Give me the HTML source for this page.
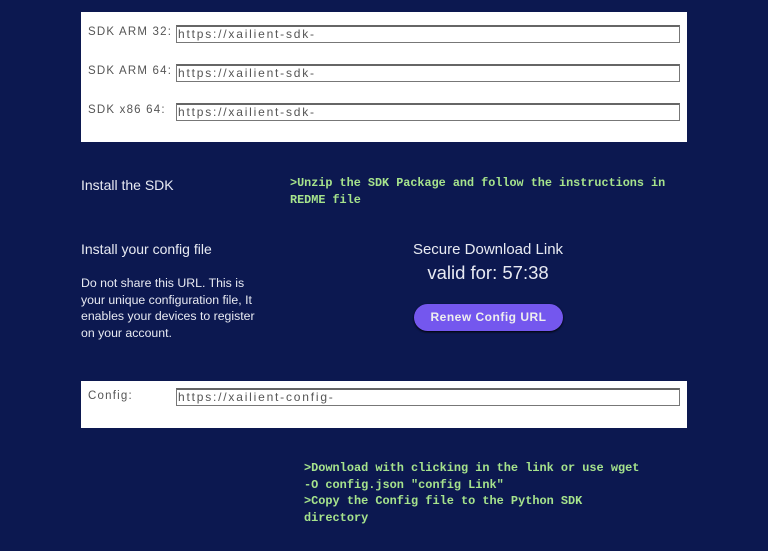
<!DOCTYPE html>
<html><head><style>
body{margin:0;width:768px;height:551px;background:#0c1850;position:relative;overflow:hidden;font-family:"Liberation Sans",sans-serif;}
.abs{position:absolute}
.panel{position:absolute;left:81px;width:606px;background:#fff;}
.lbl{position:absolute;left:7px;font-size:11.5px;letter-spacing:1.2px;color:#555;}
.inp{position:absolute;left:95px;width:501px;height:15px;border:1px solid #777;border-top:2px solid #666;font-size:12px;letter-spacing:1.8px;color:#555;line-height:15px;padding-left:1px;box-sizing:content-box}
.w{color:#e8eaf2;font-size:14px}
.mono{font-family:"Liberation Mono",monospace;color:#a6e38c;font-size:11.8px;line-height:16.5px;font-weight:bold}
</style></head><body>
<div class="panel" style="top:12px;height:130px">
<div class="lbl" style="top:14px">SDK ARM 32:</div><div class="inp" style="top:13px">https://xailient-sdk-</div>
<div class="lbl" style="top:53px">SDK ARM 64:</div><div class="inp" style="top:52px">https://xailient-sdk-</div>
<div class="lbl" style="top:92px">SDK x86 64:</div><div class="inp" style="top:91px">https://xailient-sdk-</div>
</div>
<div class="abs w" style="left:81px;top:177px">Install the SDK</div>
<div class="abs mono" style="left:290px;top:175px">&gt;Unzip the SDK Package and follow the instructions in<br>REDME file</div>
<div class="abs w" style="left:81px;top:241px">Install your config file</div>
<div class="abs" style="left:81px;top:275px;color:#e8eaf2;font-size:12.3px;line-height:16.5px">Do not share this URL. This is<br>your unique configuration file, It<br>enables your devices to register<br>on your account.</div>
<div class="abs" style="left:380px;width:216px;top:241px;text-align:center;color:#e8eaf2;font-size:15px">Secure Download Link</div>
<div class="abs" style="left:380px;width:216px;top:262px;text-align:center;color:#e8eaf2;font-size:18.5px">valid for: 57:38</div>
<div class="abs" style="left:414px;top:304px;width:149px;height:27px;border-radius:14px;background:#7457ee;box-shadow:0 1px 2px #000;color:#eee;font-size:12px;font-weight:bold;letter-spacing:0.5px;text-align:center;line-height:27px">Renew Config URL</div>
<div class="panel" style="top:381px;height:47px">
<div class="lbl" style="top:9px">Config:</div><div class="inp" style="top:7px">https://xailient-config-</div>
</div>
<div class="abs mono" style="left:304px;top:460px;font-size:11.9px">&gt;Download with clicking in the link or use wget<br>-O config.json "config Link"<br>&gt;Copy the Config file to the Python SDK<br>directory</div>
</body></html>
